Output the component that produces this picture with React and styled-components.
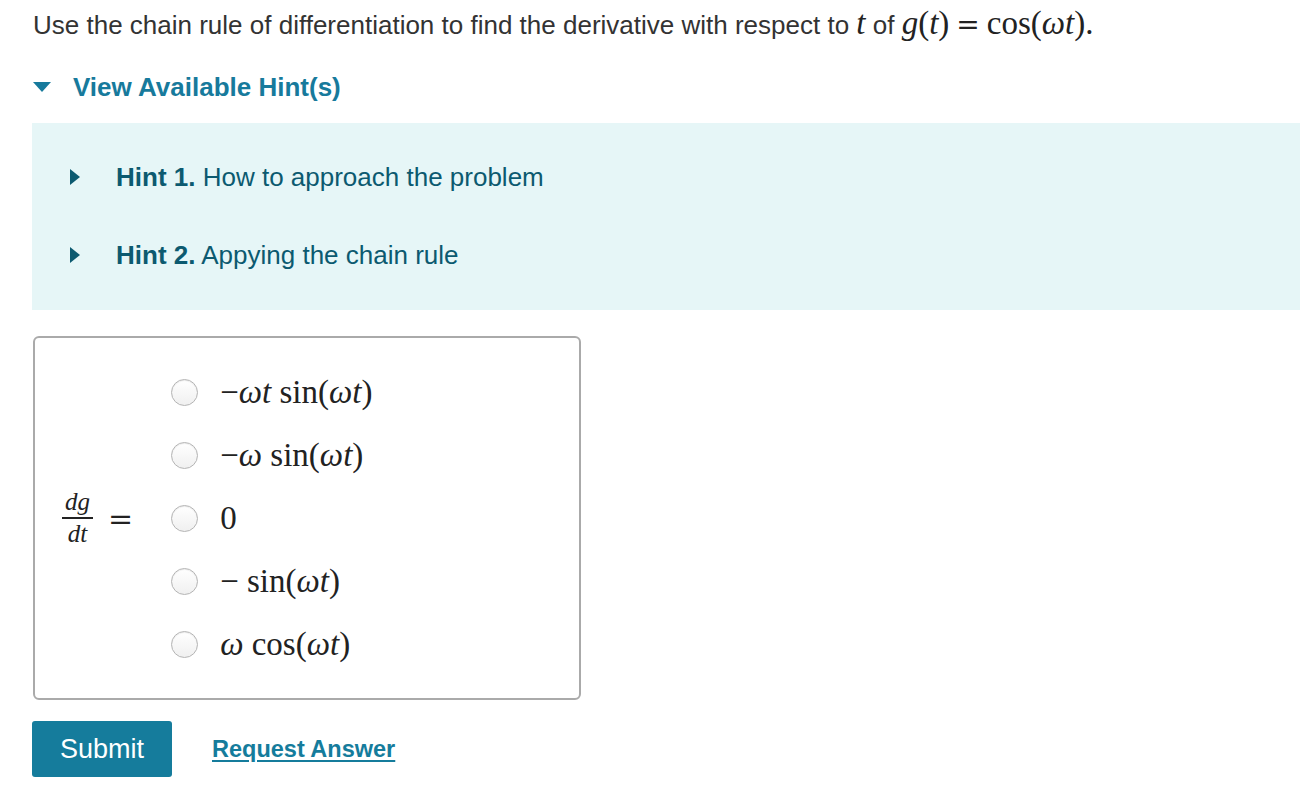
import React from 'react';
import styled, { createGlobalStyle } from 'styled-components';

const GlobalStyle = createGlobalStyle`
  body {
    margin: 0;
    background: #fff;
    font-family: "Liberation Sans", Arial, sans-serif;
    color: #333;
  }
`;

const Page = styled.div`
  padding: 4px 0 30px 33px;
`;

const Question = styled.p`
  margin: 0;
  font-size: 26px;
  line-height: 38px;
  color: #333;
`;

const M = styled.span`
  font-family: ${p => (p.$wide ? '"DejaVu Serif"' : '"Liberation Serif"')}, serif;
  font-size: ${p => (p.$wide ? '28px' : '33px')};
  font-style: ${p => (p.$up ? 'normal' : 'italic')};
  color: #222;
  margin: ${p => (p.$wide ? '0 7px' : '0')};
`;

const HintToggle = styled.div`
  display: flex;
  align-items: center;
  gap: 22px;
  margin-top: 27px;
  font-size: 26px;
  line-height: 32px;
  font-weight: bold;
  color: #177a9c;
`;

const Caret = styled.span`
  width: 0;
  height: 0;
  border-left: ${p => (p.$down ? '9px solid transparent' : `10px solid ${p.$color}`)};
  border-right: ${p => (p.$down ? '9px solid transparent' : '0')};
  border-top: ${p => (p.$down ? `10px solid ${p.$color}` : '8px solid transparent')};
  border-bottom: ${p => (p.$down ? '0' : '8px solid transparent')};
`;

const HintPanel = styled.div`
  margin-top: 20px;
  margin-left: -1px;
  background: #e6f6f7;
  padding: 39px 0 40px 38px;
  display: flex;
  flex-direction: column;
  gap: 48px;
`;

const HintRow = styled.div`
  display: flex;
  align-items: center;
  gap: 36px;
  font-size: 26px;
  line-height: 30px;
  color: #0c5a70;
  b {
    font-weight: bold;
  }
`;

const AnswerBox = styled.div`
  margin-top: 26px;
  width: 548px;
  height: 364px;
  border: 2px solid #aaa;
  border-radius: 6px;
  box-sizing: border-box;
  display: flex;
  align-items: center;
  padding-left: 27px;
`;

const Frac = styled.span`
  display: inline-flex;
  flex-direction: column;
  align-items: center;
  font-family: "Liberation Serif", "DejaVu Serif", serif;
  font-style: italic;
  font-size: 25px;
  line-height: 24px;
  color: #222;
  span:first-child {
    border-bottom: 2px solid #222;
    padding: 0 3px 3px;
  }
  span:last-child {
    padding-top: 3px;
  }
`;

const Eq = styled.span`
  font-family: "DejaVu Serif", serif;
  font-size: 30px;
  color: #222;
  margin: 0 38px 0 15px;
`;

const Options = styled.div`
  display: flex;
  flex-direction: column;
  gap: 26px;
`;

const Option = styled.label`
  display: flex;
  align-items: center;
  gap: 22px;
  height: 37px;
  font-family: "Liberation Serif", "DejaVu Serif", serif;
  font-size: 33px;
  color: #222;
`;

const Radio = styled.span`
  width: 25px;
  height: 25px;
  border-radius: 50%;
  border: 1px solid #b4b4b4;
  background: linear-gradient(#fff, #f0f0f0);
  box-shadow: inset 0 1px 1px rgba(0, 0, 0, 0.08);
  flex: none;
`;

const I = styled.i`
  font-style: italic;
`;

const Actions = styled.div`
  display: flex;
  align-items: center;
  gap: 40px;
  margin-top: 21px;
`;

const SubmitButton = styled.button`
  width: 140px;
  height: 56px;
  margin-left: -1px;
  background: #157c9c;
  color: #fff;
  border: none;
  border-radius: 3px;
  font-family: "Liberation Sans", Arial, sans-serif;
  font-size: 27px;
`;

const RequestLink = styled.a`
  font-size: 23.5px;
  font-weight: bold;
  color: #157c9c;
  text-decoration: underline;
  text-underline-offset: 3px;
`;

const options = [
  <>&minus;<I>ωt</I> sin(<I>ωt</I>)</>,
  <>&minus;<I>ω</I> sin(<I>ωt</I>)</>,
  <>0</>,
  <>&minus; sin(<I>ωt</I>)</>,
  <><I>ω</I> cos(<I>ωt</I>)</>,
];

export default function App() {
  return (
    <Page>
      <GlobalStyle />
      <Question>
        Use the chain rule of differentiation to find the derivative with respect to <M>t</M> of{' '}
        <M>g</M><M $up>(</M><M>t</M><M $up>)</M><M $up $wide>=</M><M $up>cos(</M><M>ωt</M><M $up>).</M>
      </Question>

      <HintToggle>
        <Caret $down $color="#177a9c" />
        View Available Hint(s)
      </HintToggle>

      <HintPanel>
        <HintRow>
          <Caret $color="#0c5a70" />
          <span><b>Hint 1.</b> How to approach the problem</span>
        </HintRow>
        <HintRow>
          <Caret $color="#0c5a70" />
          <span><b>Hint 2.</b> Appying the chain rule</span>
        </HintRow>
      </HintPanel>

      <AnswerBox>
        <Frac>
          <span>dg</span>
          <span>dt</span>
        </Frac>
        <Eq>=</Eq>
        <Options>
          {options.map((o, i) => (
            <Option key={i}>
              <Radio />
              <span>{o}</span>
            </Option>
          ))}
        </Options>
      </AnswerBox>

      <Actions>
        <SubmitButton>Submit</SubmitButton>
        <RequestLink href="#">Request Answer</RequestLink>
      </Actions>
    </Page>
  );
}
